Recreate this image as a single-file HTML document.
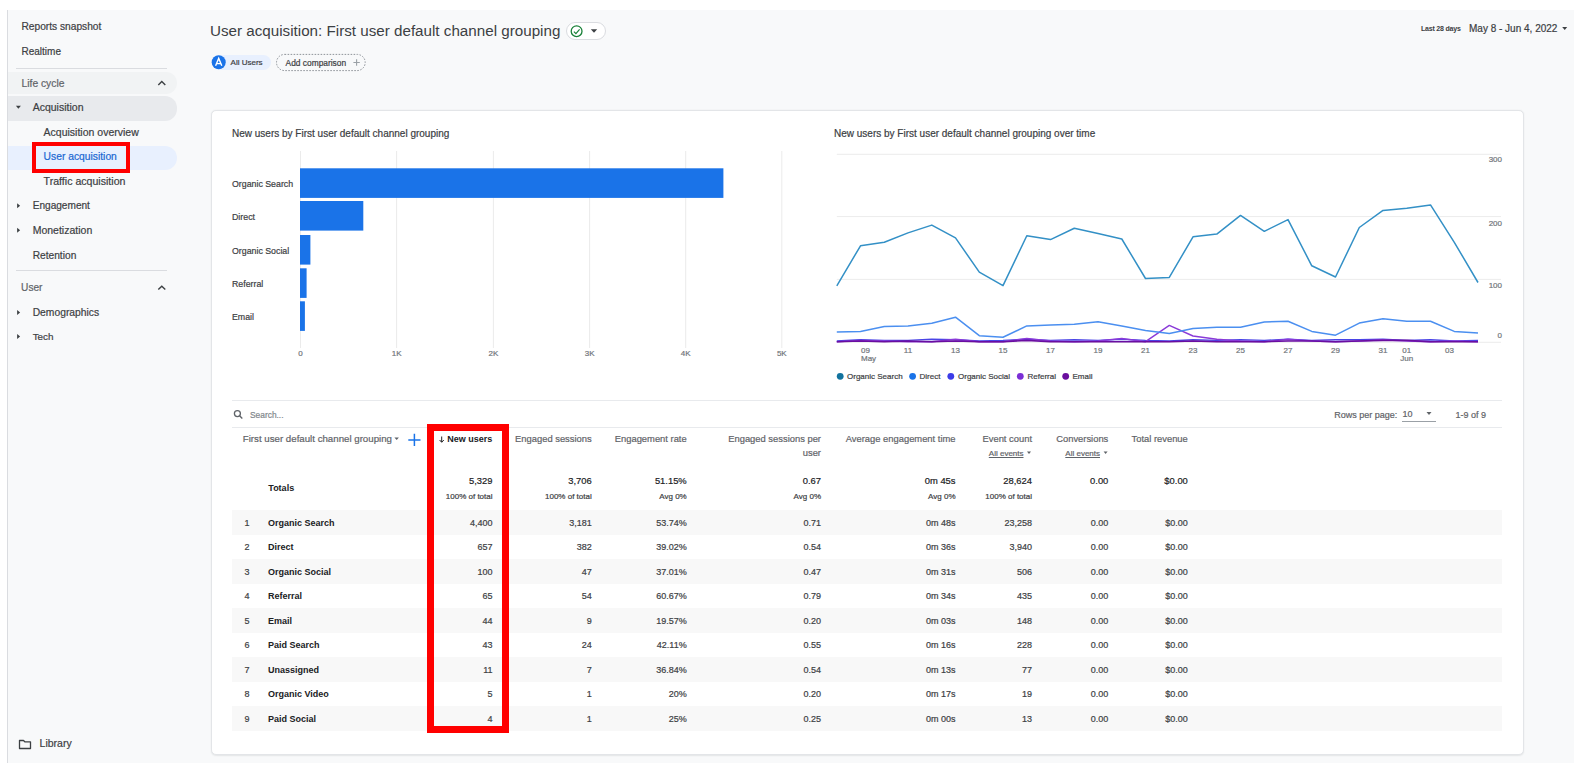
<!DOCTYPE html>
<html><head><meta charset="utf-8">
<style>
*{box-sizing:border-box;margin:0;padding:0}
html,body{width:1592px;height:771px;overflow:hidden;background:#fff}
body{position:relative;font-family:"Liberation Sans",sans-serif;color:#202124}
.a{position:absolute;white-space:nowrap;-webkit-text-stroke:0.2px currentColor}
svg{position:absolute;left:0;top:0}
</style></head><body>
<div style="position:absolute;left:7.0px;top:10.0px;width:1567.0px;height:753.0px;background:#f8f9fa;"></div><div style="position:absolute;left:7.0px;top:10.0px;width:1.0px;height:753.0px;background:#dadce0;"></div><div class="a" style="left:21.5px;top:20.4px;height:14px;line-height:14px;font-size:10.2px;color:#3c4043;font-weight:400;">Reports snapshot</div><div class="a" style="left:21.5px;top:44.8px;height:14px;line-height:14px;font-size:10.0px;color:#3c4043;font-weight:400;">Realtime</div><div style="position:absolute;left:16.0px;top:67.5px;width:151.0px;height:1.0px;background:#dadce0;"></div><div style="position:absolute;left:8.0px;top:72.3px;width:169.0px;height:22.0px;background:#f1f3f4;border-radius:0 11px 11px 0"></div><div class="a" style="left:21.5px;top:76.8px;height:14px;line-height:14px;font-size:10.3px;color:#5f6368;font-weight:400;">Life cycle</div><div style="position:absolute;left:8.0px;top:96.4px;width:169.0px;height:24.4px;background:#e8eaed;border-radius:0 12px 12px 0"></div><div class="a" style="left:32.7px;top:100.2px;height:14px;line-height:14px;font-size:10.5px;color:#3c4043;font-weight:400;">Acquisition</div><div class="a" style="left:43.6px;top:124.8px;height:14px;line-height:14px;font-size:10.5px;color:#3c4043;font-weight:400;">Acquisition overview</div><div style="position:absolute;left:8.0px;top:145.8px;width:169.0px;height:24.0px;background:#e8f0fe;border-radius:0 12px 12px 0"></div><div class="a" style="left:43.6px;top:150.3px;height:14px;line-height:14px;font-size:10.3px;color:#1967d2;font-weight:400;">User acquisition</div><div class="a" style="left:43.6px;top:173.8px;height:14px;line-height:14px;font-size:10.6px;color:#3c4043;font-weight:400;">Traffic acquisition</div><div class="a" style="left:32.7px;top:199.3px;height:14px;line-height:14px;font-size:10.1px;color:#3c4043;font-weight:400;">Engagement</div><div class="a" style="left:32.7px;top:223.1px;height:14px;line-height:14px;font-size:10.5px;color:#3c4043;font-weight:400;">Monetization</div><div class="a" style="left:32.7px;top:248.5px;height:14px;line-height:14px;font-size:10.2px;color:#3c4043;font-weight:400;">Retention</div><div style="position:absolute;left:16.0px;top:270.3px;width:151.0px;height:1.0px;background:#dadce0;"></div><div class="a" style="left:21.1px;top:281.4px;height:14px;line-height:14px;font-size:10.1px;color:#5f6368;font-weight:400;">User</div><div class="a" style="left:32.7px;top:306.0px;height:14px;line-height:14px;font-size:10.3px;color:#3c4043;font-weight:400;">Demographics</div><div class="a" style="left:32.7px;top:330.0px;height:14px;line-height:14px;font-size:9.9px;color:#3c4043;font-weight:400;">Tech</div><div class="a" style="left:39.6px;top:736.4px;height:14px;line-height:14px;font-size:10.5px;color:#3c4043;font-weight:400;">Library</div><div style="position:absolute;left:32.4px;top:141.8px;width:97.6px;height:30.8px;background:transparent;border:4px solid #f00"></div><div class="a" style="left:210.0px;top:21.1px;height:20px;line-height:20px;font-size:15.2px;color:#3c4043;font-weight:400;-webkit-text-stroke:0">User acquisition: First user default channel grouping</div><div style="position:absolute;left:566.2px;top:21.6px;width:40.0px;height:18.3px;background:#fff;border:1px solid #dadce0;border-radius:9px"></div><div style="position:absolute;left:211.5px;top:55.2px;width:59.0px;height:15.0px;background:#e8f0fe;border-radius:7.5px"></div><div class="a" style="left:230.6px;top:56.0px;height:14px;line-height:14px;font-size:8px;color:#3c4043;font-weight:400;">All Users</div><div class="a" style="left:285.6px;top:56.2px;height:14px;line-height:14px;font-size:8.4px;color:#3c4043;font-weight:400;">Add comparison</div><div class="a" style="left:1421.0px;top:22.3px;height:14px;line-height:14px;font-size:7px;color:#3c4043;font-weight:700;-webkit-text-stroke:0;letter-spacing:-0.2px">Last 28 days</div><div class="a" style="left:1469.0px;top:22.1px;height:14px;line-height:14px;font-size:10px;color:#3c4043;font-weight:400;">May 8 - Jun 4, 2022</div><div style="position:absolute;left:210.5px;top:109.5px;width:1313.5px;height:645.5px;background:#fff;border:1.5px solid #e3e5e8;border-radius:5px;box-shadow:0 0.5px 1.5px rgba(60,64,67,0.10)"></div><div class="a" style="left:232.0px;top:127.2px;height:14px;line-height:14px;font-size:10px;color:#3c4043;font-weight:400;">New users by First user default channel grouping</div><div class="a" style="left:834.0px;top:126.9px;height:14px;line-height:14px;font-size:10px;color:#3c4043;font-weight:400;">New users by First user default channel grouping over time</div><div class="a" style="left:232.0px;top:176.9px;height:14px;line-height:14px;font-size:8.8px;color:#3c4043;font-weight:400;">Organic Search</div><div class="a" style="left:232.0px;top:209.6px;height:14px;line-height:14px;font-size:8.8px;color:#3c4043;font-weight:400;">Direct</div><div class="a" style="left:232.0px;top:243.6px;height:14px;line-height:14px;font-size:8.8px;color:#3c4043;font-weight:400;">Organic Social</div><div class="a" style="left:232.0px;top:276.9px;height:14px;line-height:14px;font-size:8.8px;color:#3c4043;font-weight:400;">Referral</div><div class="a" style="left:232.0px;top:309.9px;height:14px;line-height:14px;font-size:8.8px;color:#3c4043;font-weight:400;">Email</div><div class="a" style="left:200.5px;width:200px;top:347.3px;height:14px;line-height:14px;font-size:8px;color:#70757a;font-weight:400;text-align:center;">0</div><div class="a" style="left:296.6px;width:200px;top:347.3px;height:14px;line-height:14px;font-size:8px;color:#70757a;font-weight:400;text-align:center;">1K</div><div class="a" style="left:393.4px;width:200px;top:347.3px;height:14px;line-height:14px;font-size:8px;color:#70757a;font-weight:400;text-align:center;">2K</div><div class="a" style="left:489.6px;width:200px;top:347.3px;height:14px;line-height:14px;font-size:8px;color:#70757a;font-weight:400;text-align:center;">3K</div><div class="a" style="left:585.7px;width:200px;top:347.3px;height:14px;line-height:14px;font-size:8px;color:#70757a;font-weight:400;text-align:center;">4K</div><div class="a" style="left:681.8px;width:200px;top:347.3px;height:14px;line-height:14px;font-size:8px;color:#70757a;font-weight:400;text-align:center;">5K</div><div class="a" style="right:90.0px;top:153.0px;height:14px;line-height:14px;font-size:8px;color:#70757a;font-weight:400;text-align:right;">300</div><div class="a" style="right:90.0px;top:216.5px;height:14px;line-height:14px;font-size:8px;color:#70757a;font-weight:400;text-align:right;">200</div><div class="a" style="right:90.0px;top:279.3px;height:14px;line-height:14px;font-size:8px;color:#70757a;font-weight:400;text-align:right;">100</div><div class="a" style="right:90.0px;top:329.3px;height:14px;line-height:14px;font-size:8px;color:#70757a;font-weight:400;text-align:right;">0</div><div class="a" style="left:861.0px;top:343.6px;height:14px;line-height:14px;font-size:8px;color:#70757a;font-weight:400;">09</div><div class="a" style="left:861.0px;top:352.1px;height:14px;line-height:14px;font-size:8px;color:#70757a;font-weight:400;">May</div><div class="a" style="left:808.0px;width:200px;top:343.6px;height:14px;line-height:14px;font-size:8px;color:#70757a;font-weight:400;text-align:center;">11</div><div class="a" style="left:855.5px;width:200px;top:343.6px;height:14px;line-height:14px;font-size:8px;color:#70757a;font-weight:400;text-align:center;">13</div><div class="a" style="left:903.0px;width:200px;top:343.6px;height:14px;line-height:14px;font-size:8px;color:#70757a;font-weight:400;text-align:center;">15</div><div class="a" style="left:950.5px;width:200px;top:343.6px;height:14px;line-height:14px;font-size:8px;color:#70757a;font-weight:400;text-align:center;">17</div><div class="a" style="left:998.0px;width:200px;top:343.6px;height:14px;line-height:14px;font-size:8px;color:#70757a;font-weight:400;text-align:center;">19</div><div class="a" style="left:1045.5px;width:200px;top:343.6px;height:14px;line-height:14px;font-size:8px;color:#70757a;font-weight:400;text-align:center;">21</div><div class="a" style="left:1093.0px;width:200px;top:343.6px;height:14px;line-height:14px;font-size:8px;color:#70757a;font-weight:400;text-align:center;">23</div><div class="a" style="left:1140.5px;width:200px;top:343.6px;height:14px;line-height:14px;font-size:8px;color:#70757a;font-weight:400;text-align:center;">25</div><div class="a" style="left:1188.0px;width:200px;top:343.6px;height:14px;line-height:14px;font-size:8px;color:#70757a;font-weight:400;text-align:center;">27</div><div class="a" style="left:1235.5px;width:200px;top:343.6px;height:14px;line-height:14px;font-size:8px;color:#70757a;font-weight:400;text-align:center;">29</div><div class="a" style="left:1283.0px;width:200px;top:343.6px;height:14px;line-height:14px;font-size:8px;color:#70757a;font-weight:400;text-align:center;">31</div><div class="a" style="left:1306.8px;width:200px;top:343.6px;height:14px;line-height:14px;font-size:8px;color:#70757a;font-weight:400;text-align:center;">01</div><div class="a" style="left:1349.5px;width:200px;top:343.6px;height:14px;line-height:14px;font-size:8px;color:#70757a;font-weight:400;text-align:center;">03</div><div class="a" style="left:1306.8px;width:200px;top:352.1px;height:14px;line-height:14px;font-size:8px;color:#70757a;font-weight:400;text-align:center;">Jun</div><div class="a" style="left:847.0px;top:369.9px;height:14px;line-height:14px;font-size:8px;color:#3c4043;font-weight:400;">Organic Search</div><div class="a" style="left:919.5px;top:369.9px;height:14px;line-height:14px;font-size:8px;color:#3c4043;font-weight:400;">Direct</div><div class="a" style="left:958.0px;top:369.9px;height:14px;line-height:14px;font-size:8px;color:#3c4043;font-weight:400;">Organic Social</div><div class="a" style="left:1027.5px;top:369.9px;height:14px;line-height:14px;font-size:8px;color:#3c4043;font-weight:400;">Referral</div><div class="a" style="left:1072.5px;top:369.9px;height:14px;line-height:14px;font-size:8px;color:#3c4043;font-weight:400;">Email</div><div style="position:absolute;left:232.0px;top:400.0px;width:1269.5px;height:1.0px;background:#e8eaed;"></div><div style="position:absolute;left:232.0px;top:427.0px;width:1269.5px;height:1.0px;background:#e8eaed;"></div><div class="a" style="left:250.0px;top:408.0px;height:14px;line-height:14px;font-size:8.4px;color:#80868b;font-weight:400;">Search...</div><div class="a" style="left:1334.2px;top:407.9px;height:14px;line-height:14px;font-size:9px;color:#5f6368;font-weight:400;">Rows per page:</div><div class="a" style="left:1402.5px;top:407.1px;height:14px;line-height:14px;font-size:9px;color:#5f6368;font-weight:400;">10</div><div style="position:absolute;left:1402.0px;top:421.0px;width:34.0px;height:1.0px;background:#9aa0a6;"></div><div class="a" style="left:1455.6px;top:407.9px;height:14px;line-height:14px;font-size:9px;color:#5f6368;font-weight:400;">1-9 of 9</div><div class="a" style="left:242.8px;top:432.4px;height:14px;line-height:14px;font-size:9.7px;color:#5f6368;font-weight:400;">First user default channel grouping</div><div class="a" style="right:1099.7px;top:432.2px;height:14px;line-height:14px;font-size:9px;color:#202124;font-weight:700;text-align:right;-webkit-text-stroke:0;">New users</div><div class="a" style="right:1000.3px;top:432.2px;height:14px;line-height:14px;font-size:9.4px;color:#5f6368;font-weight:400;text-align:right;">Engaged sessions</div><div class="a" style="right:905.3px;top:432.2px;height:14px;line-height:14px;font-size:9.4px;color:#5f6368;font-weight:400;text-align:right;">Engagement rate</div><div class="a" style="right:771.0px;top:432.0px;height:14px;line-height:14px;font-size:9.4px;color:#5f6368;font-weight:400;text-align:right;">Engaged sessions per</div><div class="a" style="right:771.0px;top:446.1px;height:14px;line-height:14px;font-size:9.4px;color:#5f6368;font-weight:400;text-align:right;">user</div><div class="a" style="right:636.5px;top:432.2px;height:14px;line-height:14px;font-size:9.4px;color:#5f6368;font-weight:400;text-align:right;">Average engagement time</div><div class="a" style="right:560.0px;top:431.8px;height:14px;line-height:14px;font-size:9.4px;color:#5f6368;font-weight:400;text-align:right;">Event count</div><div class="a" style="right:483.7px;top:431.8px;height:14px;line-height:14px;font-size:9.4px;color:#5f6368;font-weight:400;text-align:right;">Conversions</div><div class="a" style="right:404.2px;top:432.4px;height:14px;line-height:14px;font-size:9.4px;color:#5f6368;font-weight:400;text-align:right;">Total revenue</div><div class="a" style="right:568.5px;top:446.8px;height:14px;line-height:14px;font-size:8px;color:#5f6368;font-weight:400;text-align:right;"><u>All events</u></div><div class="a" style="right:492.0px;top:446.8px;height:14px;line-height:14px;font-size:8px;color:#5f6368;font-weight:400;text-align:right;"><u>All events</u></div><div class="a" style="left:268.3px;top:481.4px;height:14px;line-height:14px;font-size:9px;color:#202124;font-weight:700;-webkit-text-stroke:0;">Totals</div><div class="a" style="right:1099.5px;top:474.2px;height:14px;line-height:14px;font-size:9.4px;color:#202124;font-weight:400;text-align:right;">5,329</div><div class="a" style="right:1099.5px;top:489.5px;height:14px;line-height:14px;font-size:8px;color:#3c4043;font-weight:400;text-align:right;">100% of total</div><div class="a" style="right:1000.3px;top:474.2px;height:14px;line-height:14px;font-size:9.4px;color:#202124;font-weight:400;text-align:right;">3,706</div><div class="a" style="right:1000.3px;top:489.5px;height:14px;line-height:14px;font-size:8px;color:#3c4043;font-weight:400;text-align:right;">100% of total</div><div class="a" style="right:905.3px;top:474.2px;height:14px;line-height:14px;font-size:9.4px;color:#202124;font-weight:400;text-align:right;">51.15%</div><div class="a" style="right:905.3px;top:489.5px;height:14px;line-height:14px;font-size:8px;color:#3c4043;font-weight:400;text-align:right;">Avg 0%</div><div class="a" style="right:771.0px;top:474.2px;height:14px;line-height:14px;font-size:9.4px;color:#202124;font-weight:400;text-align:right;">0.67</div><div class="a" style="right:771.0px;top:489.5px;height:14px;line-height:14px;font-size:8px;color:#3c4043;font-weight:400;text-align:right;">Avg 0%</div><div class="a" style="right:636.5px;top:474.2px;height:14px;line-height:14px;font-size:9.4px;color:#202124;font-weight:400;text-align:right;">0m 45s</div><div class="a" style="right:636.5px;top:489.5px;height:14px;line-height:14px;font-size:8px;color:#3c4043;font-weight:400;text-align:right;">Avg 0%</div><div class="a" style="right:560.0px;top:474.2px;height:14px;line-height:14px;font-size:9.4px;color:#202124;font-weight:400;text-align:right;">28,624</div><div class="a" style="right:560.0px;top:489.5px;height:14px;line-height:14px;font-size:8px;color:#3c4043;font-weight:400;text-align:right;">100% of total</div><div class="a" style="right:483.7px;top:474.2px;height:14px;line-height:14px;font-size:9.4px;color:#202124;font-weight:400;text-align:right;">0.00</div><div class="a" style="right:404.2px;top:474.2px;height:14px;line-height:14px;font-size:9.4px;color:#202124;font-weight:400;text-align:right;">$0.00</div><div style="position:absolute;left:232.0px;top:510.0px;width:1270.0px;height:24.5px;background:#f8f8f8;"></div><div class="a" style="left:244.5px;top:515.6px;height:14px;line-height:14px;font-size:9px;color:#3c4043;font-weight:400;">1</div><div class="a" style="left:268.0px;top:515.6px;height:14px;line-height:14px;font-size:9px;color:#202124;font-weight:700;-webkit-text-stroke:0;">Organic Search</div><div class="a" style="right:1099.5px;top:515.6px;height:14px;line-height:14px;font-size:9px;color:#3c4043;font-weight:400;text-align:right;">4,400</div><div class="a" style="right:1000.3px;top:515.6px;height:14px;line-height:14px;font-size:9px;color:#3c4043;font-weight:400;text-align:right;">3,181</div><div class="a" style="right:905.3px;top:515.6px;height:14px;line-height:14px;font-size:9px;color:#3c4043;font-weight:400;text-align:right;">53.74%</div><div class="a" style="right:771.0px;top:515.6px;height:14px;line-height:14px;font-size:9px;color:#3c4043;font-weight:400;text-align:right;">0.71</div><div class="a" style="right:636.5px;top:515.6px;height:14px;line-height:14px;font-size:9px;color:#3c4043;font-weight:400;text-align:right;">0m 48s</div><div class="a" style="right:560.0px;top:515.6px;height:14px;line-height:14px;font-size:9px;color:#3c4043;font-weight:400;text-align:right;">23,258</div><div class="a" style="right:483.7px;top:515.6px;height:14px;line-height:14px;font-size:9px;color:#3c4043;font-weight:400;text-align:right;">0.00</div><div class="a" style="right:404.2px;top:515.6px;height:14px;line-height:14px;font-size:9px;color:#3c4043;font-weight:400;text-align:right;">$0.00</div><div class="a" style="left:244.5px;top:540.1px;height:14px;line-height:14px;font-size:9px;color:#3c4043;font-weight:400;">2</div><div class="a" style="left:268.0px;top:540.1px;height:14px;line-height:14px;font-size:9px;color:#202124;font-weight:700;-webkit-text-stroke:0;">Direct</div><div class="a" style="right:1099.5px;top:540.1px;height:14px;line-height:14px;font-size:9px;color:#3c4043;font-weight:400;text-align:right;">657</div><div class="a" style="right:1000.3px;top:540.1px;height:14px;line-height:14px;font-size:9px;color:#3c4043;font-weight:400;text-align:right;">382</div><div class="a" style="right:905.3px;top:540.1px;height:14px;line-height:14px;font-size:9px;color:#3c4043;font-weight:400;text-align:right;">39.02%</div><div class="a" style="right:771.0px;top:540.1px;height:14px;line-height:14px;font-size:9px;color:#3c4043;font-weight:400;text-align:right;">0.54</div><div class="a" style="right:636.5px;top:540.1px;height:14px;line-height:14px;font-size:9px;color:#3c4043;font-weight:400;text-align:right;">0m 36s</div><div class="a" style="right:560.0px;top:540.1px;height:14px;line-height:14px;font-size:9px;color:#3c4043;font-weight:400;text-align:right;">3,940</div><div class="a" style="right:483.7px;top:540.1px;height:14px;line-height:14px;font-size:9px;color:#3c4043;font-weight:400;text-align:right;">0.00</div><div class="a" style="right:404.2px;top:540.1px;height:14px;line-height:14px;font-size:9px;color:#3c4043;font-weight:400;text-align:right;">$0.00</div><div style="position:absolute;left:232.0px;top:559.0px;width:1270.0px;height:24.5px;background:#f8f8f8;"></div><div class="a" style="left:244.5px;top:564.6px;height:14px;line-height:14px;font-size:9px;color:#3c4043;font-weight:400;">3</div><div class="a" style="left:268.0px;top:564.6px;height:14px;line-height:14px;font-size:9px;color:#202124;font-weight:700;-webkit-text-stroke:0;">Organic Social</div><div class="a" style="right:1099.5px;top:564.6px;height:14px;line-height:14px;font-size:9px;color:#3c4043;font-weight:400;text-align:right;">100</div><div class="a" style="right:1000.3px;top:564.6px;height:14px;line-height:14px;font-size:9px;color:#3c4043;font-weight:400;text-align:right;">47</div><div class="a" style="right:905.3px;top:564.6px;height:14px;line-height:14px;font-size:9px;color:#3c4043;font-weight:400;text-align:right;">37.01%</div><div class="a" style="right:771.0px;top:564.6px;height:14px;line-height:14px;font-size:9px;color:#3c4043;font-weight:400;text-align:right;">0.47</div><div class="a" style="right:636.5px;top:564.6px;height:14px;line-height:14px;font-size:9px;color:#3c4043;font-weight:400;text-align:right;">0m 31s</div><div class="a" style="right:560.0px;top:564.6px;height:14px;line-height:14px;font-size:9px;color:#3c4043;font-weight:400;text-align:right;">506</div><div class="a" style="right:483.7px;top:564.6px;height:14px;line-height:14px;font-size:9px;color:#3c4043;font-weight:400;text-align:right;">0.00</div><div class="a" style="right:404.2px;top:564.6px;height:14px;line-height:14px;font-size:9px;color:#3c4043;font-weight:400;text-align:right;">$0.00</div><div class="a" style="left:244.5px;top:589.1px;height:14px;line-height:14px;font-size:9px;color:#3c4043;font-weight:400;">4</div><div class="a" style="left:268.0px;top:589.1px;height:14px;line-height:14px;font-size:9px;color:#202124;font-weight:700;-webkit-text-stroke:0;">Referral</div><div class="a" style="right:1099.5px;top:589.1px;height:14px;line-height:14px;font-size:9px;color:#3c4043;font-weight:400;text-align:right;">65</div><div class="a" style="right:1000.3px;top:589.1px;height:14px;line-height:14px;font-size:9px;color:#3c4043;font-weight:400;text-align:right;">54</div><div class="a" style="right:905.3px;top:589.1px;height:14px;line-height:14px;font-size:9px;color:#3c4043;font-weight:400;text-align:right;">60.67%</div><div class="a" style="right:771.0px;top:589.1px;height:14px;line-height:14px;font-size:9px;color:#3c4043;font-weight:400;text-align:right;">0.79</div><div class="a" style="right:636.5px;top:589.1px;height:14px;line-height:14px;font-size:9px;color:#3c4043;font-weight:400;text-align:right;">0m 34s</div><div class="a" style="right:560.0px;top:589.1px;height:14px;line-height:14px;font-size:9px;color:#3c4043;font-weight:400;text-align:right;">435</div><div class="a" style="right:483.7px;top:589.1px;height:14px;line-height:14px;font-size:9px;color:#3c4043;font-weight:400;text-align:right;">0.00</div><div class="a" style="right:404.2px;top:589.1px;height:14px;line-height:14px;font-size:9px;color:#3c4043;font-weight:400;text-align:right;">$0.00</div><div style="position:absolute;left:232.0px;top:608.0px;width:1270.0px;height:24.5px;background:#f8f8f8;"></div><div class="a" style="left:244.5px;top:613.6px;height:14px;line-height:14px;font-size:9px;color:#3c4043;font-weight:400;">5</div><div class="a" style="left:268.0px;top:613.6px;height:14px;line-height:14px;font-size:9px;color:#202124;font-weight:700;-webkit-text-stroke:0;">Email</div><div class="a" style="right:1099.5px;top:613.6px;height:14px;line-height:14px;font-size:9px;color:#3c4043;font-weight:400;text-align:right;">44</div><div class="a" style="right:1000.3px;top:613.6px;height:14px;line-height:14px;font-size:9px;color:#3c4043;font-weight:400;text-align:right;">9</div><div class="a" style="right:905.3px;top:613.6px;height:14px;line-height:14px;font-size:9px;color:#3c4043;font-weight:400;text-align:right;">19.57%</div><div class="a" style="right:771.0px;top:613.6px;height:14px;line-height:14px;font-size:9px;color:#3c4043;font-weight:400;text-align:right;">0.20</div><div class="a" style="right:636.5px;top:613.6px;height:14px;line-height:14px;font-size:9px;color:#3c4043;font-weight:400;text-align:right;">0m 03s</div><div class="a" style="right:560.0px;top:613.6px;height:14px;line-height:14px;font-size:9px;color:#3c4043;font-weight:400;text-align:right;">148</div><div class="a" style="right:483.7px;top:613.6px;height:14px;line-height:14px;font-size:9px;color:#3c4043;font-weight:400;text-align:right;">0.00</div><div class="a" style="right:404.2px;top:613.6px;height:14px;line-height:14px;font-size:9px;color:#3c4043;font-weight:400;text-align:right;">$0.00</div><div class="a" style="left:244.5px;top:638.1px;height:14px;line-height:14px;font-size:9px;color:#3c4043;font-weight:400;">6</div><div class="a" style="left:268.0px;top:638.1px;height:14px;line-height:14px;font-size:9px;color:#202124;font-weight:700;-webkit-text-stroke:0;">Paid Search</div><div class="a" style="right:1099.5px;top:638.1px;height:14px;line-height:14px;font-size:9px;color:#3c4043;font-weight:400;text-align:right;">43</div><div class="a" style="right:1000.3px;top:638.1px;height:14px;line-height:14px;font-size:9px;color:#3c4043;font-weight:400;text-align:right;">24</div><div class="a" style="right:905.3px;top:638.1px;height:14px;line-height:14px;font-size:9px;color:#3c4043;font-weight:400;text-align:right;">42.11%</div><div class="a" style="right:771.0px;top:638.1px;height:14px;line-height:14px;font-size:9px;color:#3c4043;font-weight:400;text-align:right;">0.55</div><div class="a" style="right:636.5px;top:638.1px;height:14px;line-height:14px;font-size:9px;color:#3c4043;font-weight:400;text-align:right;">0m 16s</div><div class="a" style="right:560.0px;top:638.1px;height:14px;line-height:14px;font-size:9px;color:#3c4043;font-weight:400;text-align:right;">228</div><div class="a" style="right:483.7px;top:638.1px;height:14px;line-height:14px;font-size:9px;color:#3c4043;font-weight:400;text-align:right;">0.00</div><div class="a" style="right:404.2px;top:638.1px;height:14px;line-height:14px;font-size:9px;color:#3c4043;font-weight:400;text-align:right;">$0.00</div><div style="position:absolute;left:232.0px;top:657.0px;width:1270.0px;height:24.5px;background:#f8f8f8;"></div><div class="a" style="left:244.5px;top:662.6px;height:14px;line-height:14px;font-size:9px;color:#3c4043;font-weight:400;">7</div><div class="a" style="left:268.0px;top:662.6px;height:14px;line-height:14px;font-size:9px;color:#202124;font-weight:700;-webkit-text-stroke:0;">Unassigned</div><div class="a" style="right:1099.5px;top:662.6px;height:14px;line-height:14px;font-size:9px;color:#3c4043;font-weight:400;text-align:right;">11</div><div class="a" style="right:1000.3px;top:662.6px;height:14px;line-height:14px;font-size:9px;color:#3c4043;font-weight:400;text-align:right;">7</div><div class="a" style="right:905.3px;top:662.6px;height:14px;line-height:14px;font-size:9px;color:#3c4043;font-weight:400;text-align:right;">36.84%</div><div class="a" style="right:771.0px;top:662.6px;height:14px;line-height:14px;font-size:9px;color:#3c4043;font-weight:400;text-align:right;">0.54</div><div class="a" style="right:636.5px;top:662.6px;height:14px;line-height:14px;font-size:9px;color:#3c4043;font-weight:400;text-align:right;">0m 13s</div><div class="a" style="right:560.0px;top:662.6px;height:14px;line-height:14px;font-size:9px;color:#3c4043;font-weight:400;text-align:right;">77</div><div class="a" style="right:483.7px;top:662.6px;height:14px;line-height:14px;font-size:9px;color:#3c4043;font-weight:400;text-align:right;">0.00</div><div class="a" style="right:404.2px;top:662.6px;height:14px;line-height:14px;font-size:9px;color:#3c4043;font-weight:400;text-align:right;">$0.00</div><div class="a" style="left:244.5px;top:687.1px;height:14px;line-height:14px;font-size:9px;color:#3c4043;font-weight:400;">8</div><div class="a" style="left:268.0px;top:687.1px;height:14px;line-height:14px;font-size:9px;color:#202124;font-weight:700;-webkit-text-stroke:0;">Organic Video</div><div class="a" style="right:1099.5px;top:687.1px;height:14px;line-height:14px;font-size:9px;color:#3c4043;font-weight:400;text-align:right;">5</div><div class="a" style="right:1000.3px;top:687.1px;height:14px;line-height:14px;font-size:9px;color:#3c4043;font-weight:400;text-align:right;">1</div><div class="a" style="right:905.3px;top:687.1px;height:14px;line-height:14px;font-size:9px;color:#3c4043;font-weight:400;text-align:right;">20%</div><div class="a" style="right:771.0px;top:687.1px;height:14px;line-height:14px;font-size:9px;color:#3c4043;font-weight:400;text-align:right;">0.20</div><div class="a" style="right:636.5px;top:687.1px;height:14px;line-height:14px;font-size:9px;color:#3c4043;font-weight:400;text-align:right;">0m 17s</div><div class="a" style="right:560.0px;top:687.1px;height:14px;line-height:14px;font-size:9px;color:#3c4043;font-weight:400;text-align:right;">19</div><div class="a" style="right:483.7px;top:687.1px;height:14px;line-height:14px;font-size:9px;color:#3c4043;font-weight:400;text-align:right;">0.00</div><div class="a" style="right:404.2px;top:687.1px;height:14px;line-height:14px;font-size:9px;color:#3c4043;font-weight:400;text-align:right;">$0.00</div><div style="position:absolute;left:232.0px;top:706.0px;width:1270.0px;height:24.5px;background:#f8f8f8;"></div><div class="a" style="left:244.5px;top:711.6px;height:14px;line-height:14px;font-size:9px;color:#3c4043;font-weight:400;">9</div><div class="a" style="left:268.0px;top:711.6px;height:14px;line-height:14px;font-size:9px;color:#202124;font-weight:700;-webkit-text-stroke:0;">Paid Social</div><div class="a" style="right:1099.5px;top:711.6px;height:14px;line-height:14px;font-size:9px;color:#3c4043;font-weight:400;text-align:right;">4</div><div class="a" style="right:1000.3px;top:711.6px;height:14px;line-height:14px;font-size:9px;color:#3c4043;font-weight:400;text-align:right;">1</div><div class="a" style="right:905.3px;top:711.6px;height:14px;line-height:14px;font-size:9px;color:#3c4043;font-weight:400;text-align:right;">25%</div><div class="a" style="right:771.0px;top:711.6px;height:14px;line-height:14px;font-size:9px;color:#3c4043;font-weight:400;text-align:right;">0.25</div><div class="a" style="right:636.5px;top:711.6px;height:14px;line-height:14px;font-size:9px;color:#3c4043;font-weight:400;text-align:right;">0m 00s</div><div class="a" style="right:560.0px;top:711.6px;height:14px;line-height:14px;font-size:9px;color:#3c4043;font-weight:400;text-align:right;">13</div><div class="a" style="right:483.7px;top:711.6px;height:14px;line-height:14px;font-size:9px;color:#3c4043;font-weight:400;text-align:right;">0.00</div><div class="a" style="right:404.2px;top:711.6px;height:14px;line-height:14px;font-size:9px;color:#3c4043;font-weight:400;text-align:right;">$0.00</div><div style="position:absolute;left:427.0px;top:424.4px;width:81.6px;height:308.4px;background:transparent;border:7px solid #f00"></div><svg width="1592" height="771" viewBox="0 0 1592 771">
<path d="M15.9 105.8L20.9 105.8L18.4 108.8Z" fill="#3c4043"/>
<path d="M17.1 203.2L20.1 205.7L17.1 208.2Z" fill="#3c4043"/>
<path d="M17.1 227.8L20.1 230.3L17.1 232.8Z" fill="#3c4043"/>
<path d="M17.1 309.9L20.1 312.4L17.1 314.9Z" fill="#3c4043"/>
<path d="M17.1 333.9L20.1 336.4L17.1 338.9Z" fill="#3c4043"/>
<path d="M158.3 85.0L161.8 81.6L165.3 85.0" stroke="#3c4043" stroke-width="1.4" fill="none"/>
<path d="M158.3 289.6L161.8 286.2L165.3 289.6" stroke="#3c4043" stroke-width="1.4" fill="none"/>
<path d="M19.5 740.5h4l1.3 1.3h5.7v6.7h-11z" stroke="#3c4043" stroke-width="1.3" fill="none" stroke-linejoin="round"/>
<circle cx="576.6" cy="31.2" r="5.4" stroke="#188038" stroke-width="1.3" fill="none"/>
<path d="M573.9 31.6L575.9 33.6L579.6 29.3" stroke="#188038" stroke-width="1.2" fill="none"/>
<path d="M590.8 29.2L597.2 29.2L594.0 32.8Z" fill="#3c4043"/>
<circle cx="218.7" cy="62.2" r="7" fill="#1a73e8"/>
<path d="M215.6 65.8L218.7 58.4L221.8 65.8M216.6 63.6h4.2" stroke="#fff" stroke-width="1.4" fill="none"/>
<rect x="276.5" y="54.4" width="88.7" height="16.2" rx="8.1" fill="none" stroke="#8f949a" stroke-width="1" stroke-dasharray="1.6 1.4"/>
<path d="M356.6 59.3v6.4M353.4 62.5h6.4" stroke="#9aa0a6" stroke-width="1.1"/>
<path d="M1562.2 27.0L1567.2 27.0L1564.7 30.0Z" fill="#3c4043"/>
<path d="M300.5 151V348" stroke="#ebebeb" stroke-width="1"/>
<path d="M396.6 151V348" stroke="#ebebeb" stroke-width="1"/>
<path d="M493.4 151V348" stroke="#ebebeb" stroke-width="1"/>
<path d="M589.6 151V348" stroke="#ebebeb" stroke-width="1"/>
<path d="M685.7 151V348" stroke="#ebebeb" stroke-width="1"/>
<path d="M781.8 151V348" stroke="#ebebeb" stroke-width="1"/>
<rect x="300" y="168.3" width="423.4" height="29.6" fill="#1a73e8"/>
<rect x="300" y="201" width="63.3" height="29.6" fill="#1a73e8"/>
<rect x="300" y="235" width="10.4" height="29.6" fill="#1a73e8"/>
<rect x="300" y="268.3" width="6.6" height="29.6" fill="#1a73e8"/>
<rect x="300" y="301.3" width="4.9" height="29.6" fill="#1a73e8"/>
<path d="M836.8 154.3H1501" stroke="#ececec" stroke-width="1"/>
<path d="M836.8 216.6H1501" stroke="#ececec" stroke-width="1"/>
<path d="M836.8 279.4H1501" stroke="#ececec" stroke-width="1"/>
<path d="M836.8 342.3H1501" stroke="#ececec" stroke-width="1"/>
<polyline points="836.8,341.0 860.5,339.8 884.3,340.4 908.0,340.4 931.8,339.2 955.5,339.8 979.3,341.0 1003.0,340.4 1026.8,339.2 1050.5,340.4 1074.3,339.8 1098.0,340.4 1121.8,339.2 1145.5,340.4 1169.3,341.0 1193.0,339.8 1216.8,340.4 1240.5,339.8 1264.3,340.4 1288.0,339.2 1311.8,340.4 1335.5,339.8 1359.3,339.8 1383.0,339.2 1406.8,340.4 1430.5,339.8 1454.3,341.0 1478.0,340.4" stroke="#4a44e6" stroke-width="1.4" fill="none" stroke-linejoin="round"/>
<polyline points="836.8,341.7 860.5,340.4 884.3,341.0 908.0,341.7 931.8,341.7 955.5,339.2 979.3,341.7 1003.0,341.7 1026.8,338.5 1050.5,341.0 1074.3,341.7 1098.0,341.0 1121.8,338.5 1145.5,341.7 1169.3,325.4 1193.0,336.0 1216.8,339.2 1240.5,341.0 1264.3,341.7 1288.0,339.2 1311.8,341.0 1335.5,341.7 1359.3,341.0 1383.0,339.8 1406.8,341.0 1430.5,341.7 1454.3,341.0 1478.0,341.7" stroke="#8a3ad8" stroke-width="1.4" fill="none" stroke-linejoin="round"/>
<polyline points="836.8,341.7 860.5,341.0 884.3,341.7 908.0,341.0 931.8,341.7 955.5,341.0 979.3,341.7 1003.0,341.7 1026.8,340.4 1050.5,341.7 1074.3,341.7 1098.0,341.7 1121.8,341.7 1145.5,341.7 1169.3,341.7 1193.0,341.0 1216.8,341.7 1240.5,341.7 1264.3,341.7 1288.0,341.0 1311.8,341.0 1335.5,341.7 1359.3,341.0 1383.0,340.4 1406.8,340.4 1430.5,341.7 1454.3,341.7 1478.0,341.7" stroke="#6a0ea0" stroke-width="1.6" fill="none" stroke-linejoin="round"/>
<polyline points="836.8,332.1 860.5,331.5 884.3,326.5 908.0,325.9 931.8,323.2 955.5,317.2 979.3,335.7 1003.0,337.3 1026.8,325.9 1050.5,324.9 1074.3,324.3 1098.0,321.8 1121.8,325.9 1145.5,330.4 1169.3,333.4 1193.0,328.6 1216.8,327.3 1240.5,327.3 1264.3,322.0 1288.0,321.3 1311.8,331.4 1335.5,335.2 1359.3,323.1 1383.0,318.7 1406.8,321.3 1430.5,321.3 1454.3,331.4 1478.0,333.0" stroke="#4b8ff0" stroke-width="1.5" fill="none" stroke-linejoin="round"/>
<polyline points="836.8,285.8 860.5,245.8 884.3,242.3 908.0,232.9 931.8,225.1 955.5,237.9 979.3,272.1 1003.0,285.6 1026.8,235.8 1050.5,239.6 1074.3,228.2 1098.0,233.4 1121.8,239.0 1145.5,278.5 1169.3,277.4 1193.0,236.8 1216.8,234.1 1240.5,215.4 1264.3,231.3 1288.0,219.6 1311.8,265.8 1335.5,277.0 1359.3,227.5 1383.0,210.4 1406.8,208.2 1430.5,204.9 1454.3,242.3 1478.0,282.5" stroke="#3390c6" stroke-width="1.5" fill="none" stroke-linejoin="round"/>
<circle cx="840.2" cy="376.3" r="3.4" fill="#12739e"/>
<circle cx="912.6" cy="376.3" r="3.4" fill="#1a73e8"/>
<circle cx="950.8" cy="376.3" r="3.4" fill="#3c3ce8"/>
<circle cx="1020.3" cy="376.3" r="3.4" fill="#7b2fd6"/>
<circle cx="1065.7" cy="376.3" r="3.4" fill="#6a0e9e"/>
<circle cx="237.4" cy="413.6" r="3" stroke="#5f6368" stroke-width="1.3" fill="none"/><path d="M239.6 415.8L242.3 418.5" stroke="#5f6368" stroke-width="1.4"/>
<path d="M1426.5 412.0L1431.5 412.0L1429.0 415.0Z" fill="#5f6368"/>
<path d="M394.4 437.5L398.9 437.5L396.7 440.1Z" fill="#5f6368"/>
<path d="M414.4 433.8v12.2M408.3 439.9h12.2" stroke="#1a73e8" stroke-width="1.5"/>
<path d="M441.7 436.5v5.5M439.6 440l2.1 2.3 2.1-2.3" stroke="#202124" stroke-width="1" fill="none"/>
<path d="M1027.0 451.5L1031.0 451.5L1029.0 453.9Z" fill="#5f6368"/>
<path d="M1103.6 451.5L1107.6 451.5L1105.6 453.9Z" fill="#5f6368"/>
</svg></body></html>
